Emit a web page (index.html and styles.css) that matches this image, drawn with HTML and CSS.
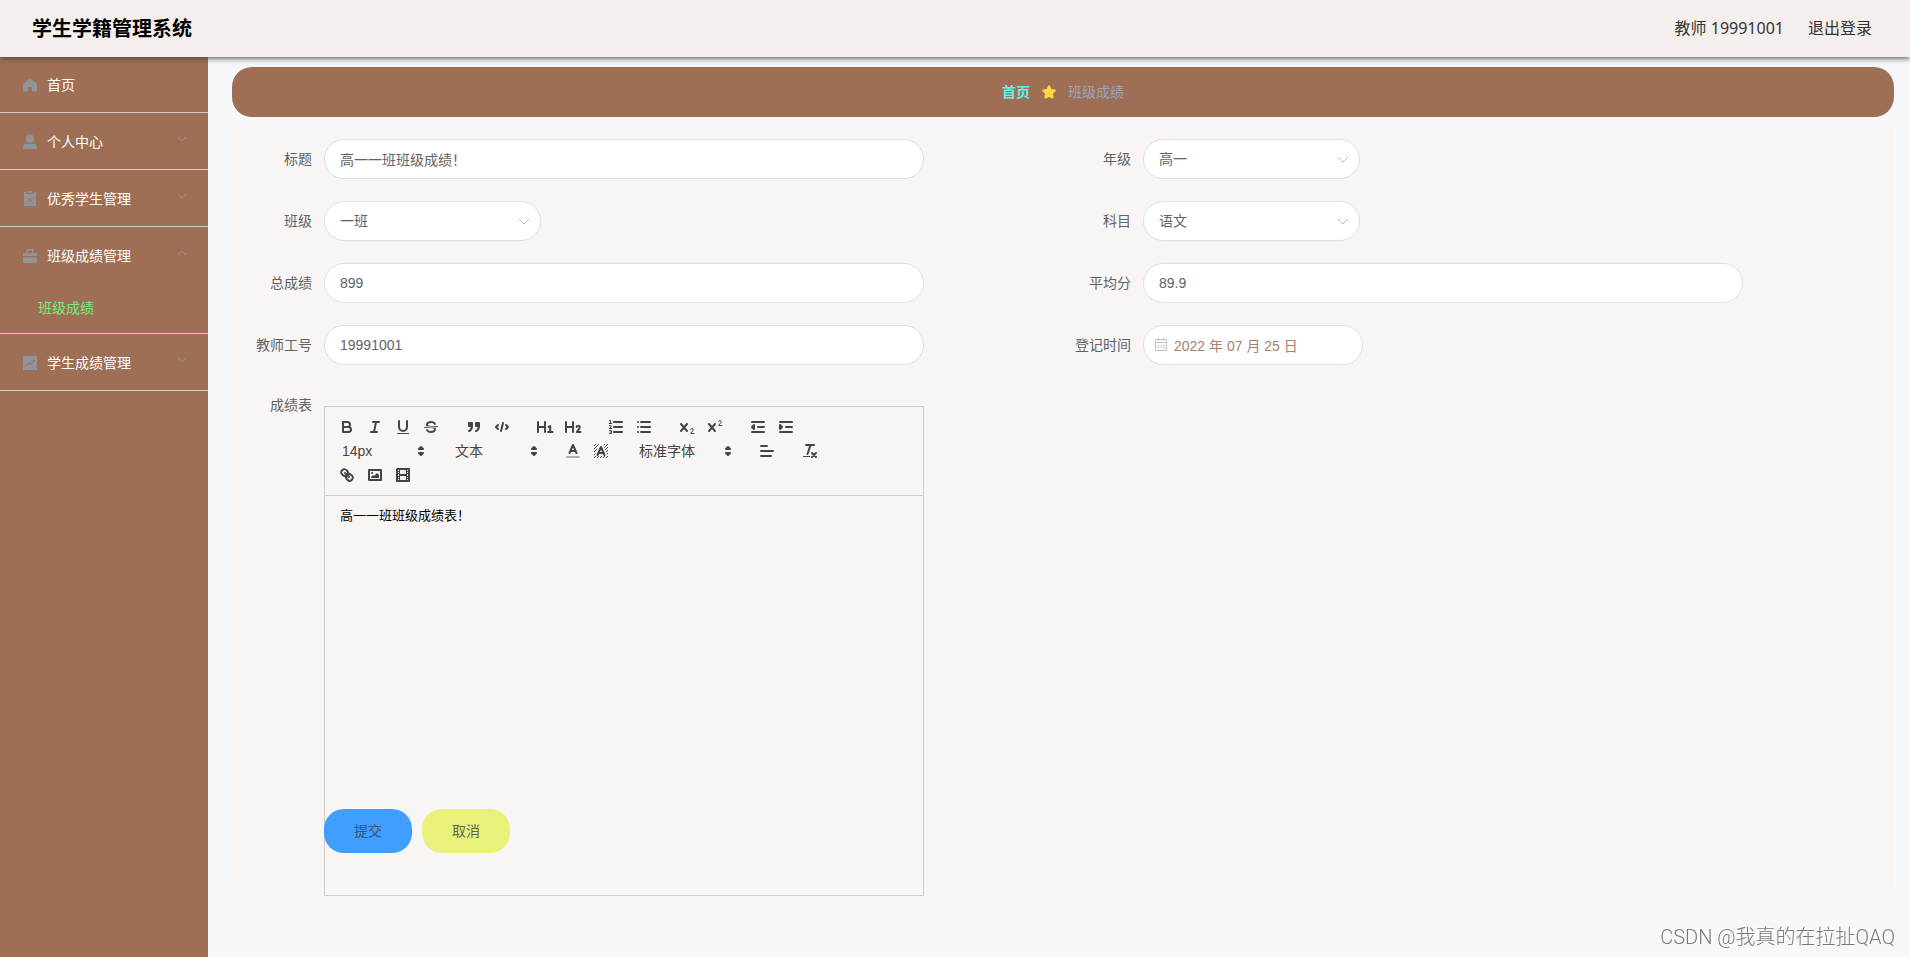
FILE: index.html
```html
<!DOCTYPE html>
<html lang="zh-CN">
<head>
<meta charset="utf-8">
<title>学生学籍管理系统</title>
<link rel="stylesheet" href="styles.css">
</head>
<body>
<header class="header">
  <h1 class="header-title">学生学籍管理系统</h1>
  <div class="header-user">
    <span>教师 19991001</span>
    <a href="#logout">退出登录</a>
  </div>
</header>

<div class="layout">
  <nav class="sidebar">
    <ul class="menu">
      <li class="menu-item">
        <a class="menu-link" href="#home">
          <svg class="menu-icon" viewBox="0 0 14 14"><path d="M7 .5 13.3 5.2Q14 5.8 14 6.6V13.5H9V9H5v4.500H0V6.6Q0 5.8.7 5.2Z"/></svg>
          <span>首页</span>
        </a>
      </li>
      <li class="menu-item">
        <a class="menu-link" href="#profile">
          <svg class="menu-icon" viewBox="0 0 14 14"><circle cx="7" cy="3.5" r="4"/><path d="M0 14v-1.500Q0 8.800 3.800 8.800H10.200Q14 8.800 14 12.500V14Z"/></svg>
          <span>个人中心</span>
          <svg class="menu-arrow" viewBox="0 0 10 6"><path d="M1 1l4 4 4-4"/></svg>
        </a>
      </li>
      <li class="menu-item">
        <a class="menu-link" href="#excellent">
          <svg class="menu-icon" viewBox="0 0 14 14"><path d="M1 0H3.500V1.700H10.500V0H13V14H1ZM4.500-1H9.500V.7H4.500Z"/><path class="menu-icon-cut" d="M4.500 5.500l5 5M9.500 5.500l-5 5"/></svg>
          <span>优秀学生管理</span>
          <svg class="menu-arrow" viewBox="0 0 10 6"><path d="M1 1l4 4 4-4"/></svg>
        </a>
      </li>
      <li class="menu-item">
        <a class="menu-link" href="#class-scores" aria-expanded="true">
          <svg class="menu-icon" viewBox="0 0 14 14"><path d="M0 4H3.500V.5Q3.500 0 4 0H10Q10.500 0 10.500.5V4H14V7H0ZM5 1.500V4H9V1.500ZM0 8.200H14V14H0Z" fill-rule="evenodd"/></svg>
          <span>班级成绩管理</span>
          <svg class="menu-arrow" viewBox="0 0 10 6"><path d="M1 5l4-4 4 4"/></svg>
        </a>
        <ul class="submenu">
          <li><a class="submenu-link" href="#class-score-list">班级成绩</a></li>
        </ul>
      </li>
      <li class="menu-item">
        <a class="menu-link" href="#student-scores">
          <svg class="menu-icon" viewBox="0 0 14 14"><path d="M0 0H14V14H0Z"/><path class="menu-icon-cut" d="M2.500 10 5.500 6.800 8 8.500 11 5M10 4.500H12"/></svg>
          <span>学生成绩管理</span>
          <svg class="menu-arrow" viewBox="0 0 10 6"><path d="M1 1l4 4 4-4"/></svg>
        </a>
      </li>
    </ul>
  </nav>

  <main class="main">
    <nav class="breadcrumb" aria-label="breadcrumb">
      <a class="breadcrumb-home" href="#home">首页</a>
      <svg class="breadcrumb-star" viewBox="0 0 14 14"><path d="M7 1.200 8.700 4.900 12.800 5.500 9.900 8.400 10.600 12.500 7 10.800 3.400 12.500 4.100 8.400 1.200 5.500 5.300 4.900Z"/></svg>
      <span class="breadcrumb-current">班级成绩</span>
    </nav>

    <form class="form">
      <div class="fields">
        <div class="field">
          <label class="label" for="title">标题</label>
          <input class="input" id="title" type="text" value="高一一班班级成绩！">
        </div>
        <div class="field">
          <label class="label" for="grade">年级</label>
          <div class="select">
            <select class="input" id="grade"><option>高一</option></select>
            <svg class="select-arrow" viewBox="0 0 12 7"><path d="M1 1l5 5 5-5"/></svg>
          </div>
        </div>
        <div class="field">
          <label class="label" for="class">班级</label>
          <div class="select">
            <select class="input" id="class"><option>一班</option></select>
            <svg class="select-arrow" viewBox="0 0 12 7"><path d="M1 1l5 5 5-5"/></svg>
          </div>
        </div>
        <div class="field">
          <label class="label" for="subject">科目</label>
          <div class="select">
            <select class="input" id="subject"><option>语文</option></select>
            <svg class="select-arrow" viewBox="0 0 12 7"><path d="M1 1l5 5 5-5"/></svg>
          </div>
        </div>
        <div class="field">
          <label class="label" for="total">总成绩</label>
          <input class="input" id="total" type="text" value="899">
        </div>
        <div class="field">
          <label class="label" for="average">平均分</label>
          <input class="input" id="average" type="text" value="89.9">
        </div>
        <div class="field">
          <label class="label" for="teacher">教师工号</label>
          <input class="input" id="teacher" type="text" value="19991001">
        </div>
        <div class="field">
          <label class="label" for="date">登记时间</label>
          <div class="date">
            <svg class="date-icon" viewBox="0 0 14 14"><path d="M1.500 1.500H12.500V12.500H1.500ZM1.500 4.500H12.500M4.500 0V3M9.500 0V3"/><path d="M3.500 7.500H5.500M6.500 7.500H8M9 7.500H11M3.500 9.500H5.500M6.500 9.500H8M9 9.500H11"/></svg>
            <input class="input date-input" id="date" type="text" value="2022 年 07 月 25 日">
          </div>
        </div>
      </div>

      <div class="field field-editor">
        <span class="label label-editor" id="editor-label">成绩表</span>
        <div class="editor">
          <div class="toolbar">
            <div class="tools">
              <button class="tool" type="button" aria-label="加粗"><svg viewBox="0 0 18 18"><path d="M5 4H9.500A2.500 2.500 0 0 1 9.500 9H5ZM5 9H10.500A2.500 2.500 0 0 1 10.500 14H5Z"/></svg></button>
              <button class="tool" type="button" aria-label="斜体"><svg viewBox="0 0 18 18"><path d="M7 4H13M5 14H11M8 14 10 4"/></svg></button>
              <button class="tool" type="button" aria-label="下划线"><svg viewBox="0 0 18 18"><path d="M5 3V9a4 4 0 0 0 8 0V3"/><rect class="fill" x="3" y="15" width="12" height="1"/></svg></button>
              <button class="tool" type="button" aria-label="删除线"><svg viewBox="0 0 18 18"><path class="thin" d="M15.500 8.500 2.500 9.500"/><path class="fill" d="M9.007,8C6.542,7.791,6,7.519,6,6.500,6,5.792,7.283,5,9,5c1.571,0,2.765.679,2.969,1.309a1,1,0,0,0,1.900-.617C13.356,4.106,11.354,3,9,3,6.200,3,4,4.538,4,6.500a3.200,3.200,0,0,0,.5,1.843Z"/><path class="fill" d="M8.984,10C11.457,10.208,12,10.479,12,11.500c0,.708-1.283,1.500-3,1.500-1.571,0-2.765-.679-2.969-1.309a1,1,0,1,0-1.900.617C4.644,13.894,6.646,15,9,15c2.800,0,5-1.538,5-3.500a3.200,3.200,0,0,0-.5-1.843Z"/></svg></button>
            </div>
            <div class="tools">
              <button class="tool" type="button" aria-label="引用"><svg viewBox="0 0 18 18"><rect class="solid" x="4" y="5" width="3" height="3"/><rect class="solid" x="11" y="5" width="3" height="3"/><path class="solid" d="M7,8c0,4.031-3,5-3,5M14,8c0,4.031-3,5-3,5"/></svg></button>
              <button class="tool" type="button" aria-label="代码"><svg viewBox="0 0 18 18"><path d="M5 7 3 9 5 11M13 7 15 9 13 11M10 5 8 13"/></svg></button>
            </div>
            <div class="tools">
              <button class="tool" type="button" aria-label="一级标题"><svg viewBox="0 0 18 18"><path d="M2 4V14M9 4V14M2 9H9M12.500 9 14.200 8V14M12 14H16.500"/></svg></button>
              <button class="tool" type="button" aria-label="二级标题"><svg viewBox="0 0 18 18"><path d="M2 4V14M9 4V14M2 9H9"/><path d="M12.500 9Q13 7.800 14.200 7.800 16 7.800 15.700 9.500 15.500 10.500 12.800 14H16.500"/></svg></button>
            </div>
            <div class="tools">
              <button class="tool" type="button" aria-label="有序列表"><svg viewBox="0 0 18 18"><path d="M7 4H15M7 9H15M7 14H15"/><path class="thin" d="M2.500 2.500H3.500V5.500M2.200 5.500H4.800M2.500 7.500H4.200V8.800L2.500 10.500H4.800M2.500 12.500H4.300V15.500H2.500M3 14H4.300"/></svg></button>
              <button class="tool" type="button" aria-label="无序列表"><svg viewBox="0 0 18 18"><path d="M6 4H15M6 9H15M6 14H15M3 4H3M3 9H3M3 14H3"/></svg></button>
            </div>
            <div class="tools">
              <button class="tool" type="button" aria-label="下标"><svg viewBox="0 0 18 18"><path d="M3 6 9 13M9 6 3 13"/><path class="thin" d="M12.500 11.500Q13 10.500 14.200 10.500 15.800 10.800 15 12.500L12.500 15.500H16"/></svg></button>
              <button class="tool" type="button" aria-label="上标"><svg viewBox="0 0 18 18"><path d="M3 6 9 13M9 6 3 13"/><path class="thin" d="M12.500 3.500Q13 2.500 14.200 2.500 15.800 2.800 15 4.500L12.500 7.500H16"/></svg></button>
            </div>
            <div class="tools">
              <button class="tool" type="button" aria-label="减少缩进"><svg viewBox="0 0 18 18"><path d="M3 14H15M3 4H15M9 9H15"/><path class="solid" d="M5 7V11L3 9Z"/></svg></button>
              <button class="tool" type="button" aria-label="增加缩进"><svg viewBox="0 0 18 18"><path d="M3 14H15M3 4H15M9 9H15"/><path class="solid" d="M3 7V11L5 9Z"/></svg></button>
            </div>
            <div class="tools">
              <div class="picker">
                <select class="picker-select" aria-label="字号"><option>14px</option></select>
                <svg class="picker-arrow" viewBox="0 0 18 18"><path class="solid" d="M7 11 9 13 11 11ZM7 7 9 5 11 7Z"/></svg>
              </div>
            </div>
            <div class="tools">
              <div class="picker">
                <select class="picker-select" aria-label="段落"><option>文本</option></select>
                <svg class="picker-arrow" viewBox="0 0 18 18"><path class="solid" d="M7 11 9 13 11 11ZM7 7 9 5 11 7Z"/></svg>
              </div>
            </div>
            <div class="tools">
              <button class="tool" type="button" aria-label="文字颜色"><svg viewBox="0 0 18 18"><path class="faint" d="M3 15H15"/><path d="M5.500 11 9 3 12.500 11M11.600 9H6.400"/></svg></button>
              <button class="tool" type="button" aria-label="背景颜色"><svg viewBox="0 0 18 18"><defs><pattern id="hatch" width="3" height="3" patternUnits="userSpaceOnUse"><path class="fill" d="M0 2h1v1H0ZM1 1h1v1H1ZM2 0h1v1H2Z"/></pattern></defs><path class="hatch" d="M2 2H7L3 13V14H15V13L11 2H16V16H2Z"/><path d="M5.500 13 9 5 12.500 13M11.600 11H6.400"/></svg></button>
            </div>
            <div class="tools">
              <div class="picker picker-font">
                <select class="picker-select" aria-label="字体"><option>标准字体</option></select>
                <svg class="picker-arrow" viewBox="0 0 18 18"><path class="solid" d="M7 11 9 13 11 11ZM7 7 9 5 11 7Z"/></svg>
              </div>
            </div>
            <div class="tools">
              <button class="tool" type="button" aria-label="对齐"><svg viewBox="0 0 18 18"><path d="M3 9H15M3 14H13M3 4H9"/></svg></button>
            </div>
            <div class="tools">
              <button class="tool" type="button" aria-label="清除格式"><svg viewBox="0 0 18 18"><path d="M5 3H13M6.500 12 9.500 3M11 11 15 15M15 11 11 15"/><rect class="fill" x="2" y="14" width="7" height="1"/></svg></button>
            </div>
            <div class="tools">
              <button class="tool" type="button" aria-label="链接"><svg viewBox="0 0 18 18"><path d="M7 7 11 11M8.900,4.577a3.476,3.476,0,0,1,.36,4.679A3.476,3.476,0,0,1,4.577,8.900C3.185,7.500,2.035,6.400,4.217,4.217S7.500,3.185,8.900,4.577ZM13.423,9.100a3.476,3.476,0,0,0-4.679-.36,3.476,3.476,0,0,0,.36,4.679c1.392,1.392,2.500,2.542,4.679.36S14.815,10.500,13.423,9.100Z"/></svg></button>
              <button class="tool" type="button" aria-label="图片"><svg viewBox="0 0 18 18"><rect x="3" y="4" width="12" height="10"/><circle class="fill" cx="6" cy="7" r="1"/><path class="fill" d="M5 12V11L7 9 8 10 11 7 13 9V12Z"/></svg></button>
              <button class="tool" type="button" aria-label="视频"><svg viewBox="0 0 18 18"><rect x="3" y="3" width="12" height="12"/><path class="fill" d="M5 3h1v12H5ZM12 3h1v12h-1ZM5 8h8v2H5ZM3 5h3v1H3ZM3 7h3v1H3ZM3 10h3v1H3ZM3 12h3v1H3ZM12 5h3v1h-3ZM12 7h3v1h-3ZM12 10h3v1h-3ZM12 12h3v1h-3Z"/></svg></button>
            </div>
          </div>
          <div class="editor-body" contenteditable="true" role="textbox" aria-multiline="true" aria-labelledby="editor-label"><p>高一一班班级成绩表！</p></div>
        </div>
      </div>

      <div class="actions">
        <button class="button button-primary" type="submit">提交</button>
        <button class="button button-cancel" type="button">取消</button>
      </div>
    </form>
  </main>
</div>
<div class="watermark">CSDN @我真的在拉扯QAQ</div>
</body>
</html>
```

FILE: styles.css
```css
* {
  box-sizing: border-box;
}

body {
  margin: 0;
  background: #f6f8fa;
  color: #606266;
  font: 14px/20px "Liberation Sans", "Noto Sans CJK SC", sans-serif;
}

a {
  color: inherit;
  text-decoration: none;
}

ul {
  margin: 0;
  padding: 0;
  list-style: none;
}

.header {
  position: relative;
  z-index: 1;
  display: flex;
  align-items: center;
  justify-content: space-between;
  height: 57px;
  margin-bottom: -1px;
  padding: 0 38px 0 32px;
  background: #f4eeed;
  box-shadow: 0 1px 6px #444;
}

.header-title {
  margin: 0;
  color: #000;
  font-size: 20px;
  line-height: 28px;
}

.header-user {
  display: flex;
  gap: 24px;
  padding-bottom: 2px;
  color: #333;
  font-family: "Noto Sans", "Noto Sans CJK SC", sans-serif;
  font-size: 16px;
}

.layout {
  display: flex;
  min-height: calc(100vh - 56px);
}

.sidebar {
  flex: 0 0 208px;
  background: #9e6f55;
}

.menu-item {
  border-bottom: 1px solid #ccc;
}

.menu-link {
  display: flex;
  align-items: center;
  height: 56px;
  padding: 2px 21px 0 23px;
  color: #fff;
}

.menu-icon {
  width: 14px;
  height: 14px;
  margin-right: 10px;
  overflow: visible;
  fill: #909399;
}

.menu-icon-cut {
  fill: none;
  stroke: #9e6f55;
}

.menu-arrow {
  width: 10px;
  height: 6px;
  margin: 0 0 6px auto;
  fill: none;
  stroke: #9a9392;
}

.submenu-link {
  display: block;
  padding-left: 38px;
  color: #7aec7a;
  line-height: 50px;
}

.main {
  flex: 1;
  min-width: 0;
  padding: 11px 16px 0 24px;
}

.breadcrumb {
  display: flex;
  align-items: center;
  justify-content: center;
  gap: 12px;
  height: 50px;
  margin-bottom: 10px;
  border-radius: 20px;
  background: #9e6f55;
}

.breadcrumb-home {
  color: #62f0f0;
  font-weight: bold;
}

.breadcrumb-star {
  width: 14px;
  height: 14px;
  fill: #ffd740;
  stroke: #ffd740;
  stroke-width: 2;
  stroke-linejoin: round;
}

.breadcrumb-current {
  color: #97a8be;
}

.form {
  padding: 12px;
  background: #f9f5f4;
}

.fields {
  display: grid;
  grid-template-columns: 1fr 1fr;
  row-gap: 22px;
  margin-bottom: 22px;
}

.field {
  display: flex;
}

.label {
  flex: 0 0 80px;
  padding-right: 12px;
  line-height: 40px;
  text-align: right;
}

.label-editor {
  line-height: 36px;
}

.input {
  width: 600px;
  height: 40px;
  padding: 0 15px;
  border: 1px solid #dcdfe6;
  border-radius: 20px;
  outline: 0;
  background: #fff;
  color: #606266;
  font: inherit;
  appearance: none;
}

.select {
  position: relative;
  width: 217px;
}

.select .input {
  width: 100%;
}

.select-arrow {
  position: absolute;
  top: 17px;
  right: 11px;
  width: 12px;
  height: 7px;
  fill: none;
  stroke: #b8bcc4;
  pointer-events: none;
}

.date {
  position: relative;
  width: 220px;
}

.date-input {
  width: 100%;
  padding-left: 30px;
  color: #a98069;
}

.date-icon {
  position: absolute;
  top: 13px;
  left: 11px;
  width: 14px;
  height: 14px;
  fill: none;
  stroke: #c0c4cc;
}

/* The editor is taller than its row, so it runs on behind the buttons. */
.field-editor {
  height: 422px;
}

.editor {
  display: flex;
  flex-direction: column;
  width: 600px;
  height: 490px;
  margin-top: 19px;
  border: 1px solid #ccc;
}

.toolbar {
  display: flex;
  flex-wrap: wrap;
  padding: 8px;
  border-bottom: 1px solid #ccc;
}

.tools {
  display: flex;
  margin-right: 15px;
}

.tool {
  width: 28px;
  height: 24px;
  padding: 3px 5px;
  border: 0;
  background: none;
}

.tool svg,
.picker-arrow {
  display: block;
  width: 18px;
  height: 18px;
  fill: none;
  stroke: #444;
  stroke-width: 2;
  stroke-linecap: round;
  stroke-linejoin: round;
}

.tool .thin {
  stroke-width: 1;
}

.tool .fill {
  fill: #444;
  stroke: none;
}

.toolbar .solid {
  fill: #444;
}

.tool .faint {
  opacity: .4;
}

.tool .hatch {
  fill: url(#hatch);
  stroke: none;
}

.picker {
  position: relative;
  width: 98px;
}

.picker-font {
  width: 108px;
}

.picker-select {
  width: 100%;
  height: 24px;
  padding: 0 20px 0 8px;
  border: 1px solid transparent;
  background: none;
  color: #444;
  font: inherit;
  appearance: none;
}

.picker-arrow {
  position: absolute;
  top: 3px;
  right: 1px;
  pointer-events: none;
}

.editor-body {
  flex: 1;
  padding: 12px 15px;
  outline: 0;
  color: #000;
  font-size: 13px;
  line-height: 16px;
}

.editor-body p {
  margin: 0;
}

.actions {
  position: relative;
  display: flex;
  gap: 10px;
  margin: 0 0 22px 80px;
}

.button {
  width: 88px;
  height: 44px;
  border: 0;
  border-radius: 20px;
  font: inherit;
}

.button-primary {
  background: #409eff;
  color: #30567f;
}

.button-cancel {
  background: #e8f27a;
  color: #606266;
}

.watermark {
  position: fixed;
  right: 15px;
  bottom: 6px;
  color: #77797c;
  font-family: Roboto, "Noto Sans CJK SC", sans-serif;
  font-size: 20px;
  font-weight: 300;
  line-height: 28px;
  text-shadow: -1px -1px 0 #fff;
}
```
